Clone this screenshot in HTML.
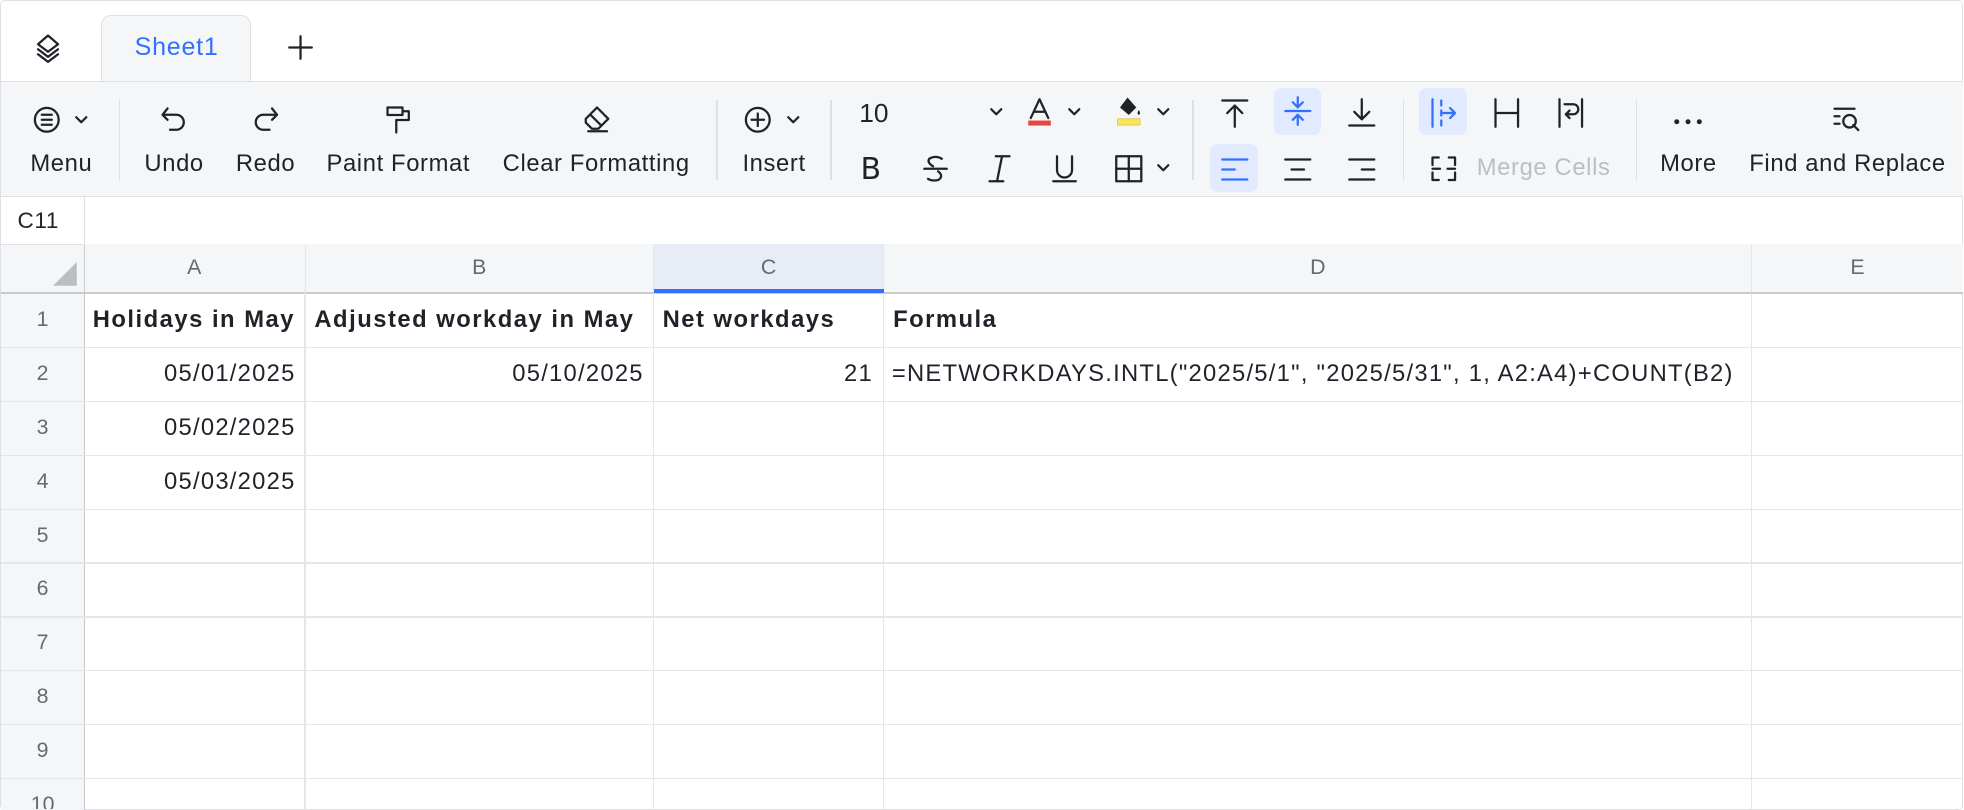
<!DOCTYPE html>
<html><head><meta charset="utf-8">
<style>
html,body{margin:0;padding:0;background:#fff;width:1964px;height:810px;overflow:hidden}
#w{zoom:1.25255;position:relative;width:1568px;height:647px;font-family:"Liberation Sans",sans-serif;color:#1f2329}
.a{position:absolute}
.lbl{position:absolute;font-size:19px;letter-spacing:0.5px;top:120px;transform:translateX(-50%);white-space:nowrap;color:#1f2329}
.sep{position:absolute;width:1px;background:#dee0e3;top:80px;height:64px}
svg{position:absolute;overflow:visible}
.ic{fill:none;stroke:#1f2329;stroke-width:1.8;stroke-linecap:round;stroke-linejoin:round}
.bl{stroke:#3370ff}
.hl{position:absolute;background:#e1eaff;border-radius:6px;width:38px;height:38px}
.col{position:absolute;top:195px;height:38px;line-height:38px;text-align:center;font-size:17px;color:#646a73;background:#f5f6f7;border-right:1px solid #e5e6e8;box-sizing:border-box}
.rh{position:absolute;left:1px;width:66px;text-align:center;font-size:17px;color:#646a73;background:#f5f6f7}
.hline{position:absolute;left:1px;width:1566px;height:1px;background:#e5e6e8}
.vline{position:absolute;top:234px;height:413px;width:1px;background:#e5e6e8}
.c{position:absolute;font-size:19px;letter-spacing:1px;height:43px;line-height:43px;white-space:nowrap}
.b{font-weight:bold;letter-spacing:1.2px}
.r{text-align:right}
.n{font-size:17px;letter-spacing:0;color:#646a73;left:1px;width:66px;text-align:center}
</style></head><body><div id="w">
<div class="a" style="left:0;top:0;width:1566px;height:645px;border:1px solid #dee0e3;border-radius:4px"></div>
<svg style="left:26px;top:26px" width="24" height="24" viewBox="0 0 24 24"><path class="ic" d="M12 2 L20 9 L12 15 L4 9 Z M4 13 L12 19 L20 13 M4 17 L12 23 L20 17"/></svg>
<div class="a" style="left:81px;top:12px;width:118px;height:54px;background:#f5f6f7;border:1px solid #dee0e3;border-bottom:none;border-radius:8px 8px 0 0"></div>
<div class="a" style="left:81px;top:26px;width:120px;text-align:center;font-size:20px;letter-spacing:0.6px;color:#3370ff">Sheet1</div>
<svg style="left:230px;top:28px" width="20" height="20"><path class="ic" d="M10 1V19M1 10H19" stroke-width="2.2"/></svg>
<div class="a" style="left:1px;top:65px;width:1566px;height:92px;background:#f5f6f7;border-top:1px solid #dee0e3;border-bottom:1px solid #dee0e3;box-sizing:border-box"></div>
<svg style="left:26px;top:85px" width="22" height="22"><circle class="ic" cx="11" cy="11" r="9.5"/><path class="ic" d="M7 7H15M7 11H15M7 15H15"/></svg>
<svg style="left:60px;top:93px" width="10" height="6"><path class="ic" d="M1 1L5 5L9 1" stroke-width="1.4"/></svg>
<div class="lbl" style="left:49px">Menu</div>
<div class="sep" style="left:95px"></div>
<svg style="left:128px;top:85px" width="22" height="22"><path class="ic" d="M6 2L2 7L6 11M2 7H13A6 6 0 0 1 13 19H8"/></svg>
<div class="lbl" style="left:139px">Undo</div>
<svg style="left:201px;top:85px" width="22" height="22"><path class="ic" d="M16 2L20 7L16 11M20 7H9A6 6 0 0 0 9 19H14"/></svg>
<div class="lbl" style="left:212px">Redo</div>
<svg style="left:307px;top:84px" width="22" height="24"><path class="ic" d="M2 2H14V8H2ZM14 5H19V12H9V22"/></svg>
<div class="lbl" style="left:318px">Paint Format</div>
<svg style="left:465px;top:84px" width="24" height="24"><path class="ic" d="M12 2L21 11L13 19H8L3 14V11ZM7 8L15 16M5 21H20"/></svg>
<div class="lbl" style="left:476px">Clear Formatting</div>
<div class="sep" style="left:572px"></div>
<svg style="left:594px;top:85px" width="22" height="22"><circle class="ic" cx="11" cy="11" r="9.5"/><path class="ic" d="M11 6V16M6 11H16"/></svg>
<svg style="left:628px;top:93px" width="10" height="6"><path class="ic" d="M1 1L5 5L9 1" stroke-width="1.4"/></svg>
<div class="lbl" style="left:618px">Insert</div>
<div class="sep" style="left:663px"></div>
<div class="a" style="left:686px;top:78px;font-size:21px">10</div>
<svg style="left:790px;top:86px" width="10" height="6"><path class="ic" d="M1 1L5 5L9 1" stroke-width="1.4"/></svg>
<svg style="left:820px;top:78px" width="20" height="24"><path class="ic" d="M3 16L10 1L17 16M5.5 11H14.5"/><rect x="1" y="18" width="18" height="4" fill="#e5483f"/></svg>
<svg style="left:853px;top:86px" width="10" height="6"><path class="ic" d="M1 1L5 5L9 1" stroke-width="1.4"/></svg>
<svg style="left:890px;top:76px" width="22" height="26"><path d="M10 2L17 10L11 16L4 10Z" fill="#1f2329"/><path d="M19 12Q21 15 19 16Q17 15 19 12Z" fill="#1f2329"/><rect x="2" y="19" width="18" height="5" fill="#fbe35b" stroke="#d9c243" stroke-width=".6"/></svg>
<svg style="left:924px;top:86px" width="10" height="6"><path class="ic" d="M1 1L5 5L9 1" stroke-width="1.4"/></svg>
<div class="a" style="left:687px;top:121px;font-size:24px;font-family:'DejaVu Sans',sans-serif">B</div>
<svg style="left:737px;top:124px" width="20" height="22"><path class="ic" d="M15 3Q10 0 5 3Q3 6 8 9M1 11H19M12 13Q17 17 12 20Q7 21 4 19"/></svg>
<svg style="left:788px;top:124px" width="20" height="22"><path class="ic" d="M7 1H18M2 21H13M12 1L8 21"/></svg>
<svg style="left:840px;top:124px" width="20" height="22"><path class="ic" d="M4 1V12A6 6 0 0 0 16 12V1M1 21H19"/></svg>
<svg style="left:890px;top:124px" width="22" height="22"><rect class="ic" x="1" y="1" width="20" height="20"/><path class="ic" d="M11 1V21M1 11H21"/></svg>
<svg style="left:924px;top:131px" width="10" height="6"><path class="ic" d="M1 1L5 5L9 1" stroke-width="1.4"/></svg>
<div class="sep" style="left:952px"></div>
<svg style="left:975px;top:78px" width="22" height="24"><path class="ic" d="M1 2H21M11 6V23M5 12L11 6L17 12"/></svg>
<div class="hl" style="left:1017px;top:70px"></div>
<svg style="left:1025px;top:77px" width="22" height="24"><path class="ic bl" d="M1 12H21M11 1V9M7 5L11 9L15 5M11 23V15M7 19L11 15L15 19"/></svg>
<svg style="left:1076px;top:78px" width="22" height="24"><path class="ic" d="M1 22H21M11 1V17M5 11L11 17L17 11"/></svg>
<div class="hl" style="left:966px;top:115px"></div>
<svg style="left:975px;top:125px" width="22" height="20"><path class="ic bl" d="M1 2H21M1 10H11M1 18H21" stroke-width="2"/></svg>
<svg style="left:1025px;top:125px" width="22" height="20"><path class="ic" d="M1 2H21M6 10H16M1 18H21" stroke-width="2"/></svg>
<svg style="left:1076px;top:125px" width="22" height="20"><path class="ic" d="M1 2H21M11 10H21M1 18H21" stroke-width="2"/></svg>
<div class="sep" style="left:1120px"></div>
<div class="hl" style="left:1133px;top:70px"></div>
<svg style="left:1142px;top:78px" width="22" height="24"><path class="ic bl" d="M2 1V23M9 2V6M9 10V14M9 18V22M9 12H20M16 8L20 12L16 16"/></svg>
<svg style="left:1192px;top:78px" width="22" height="24"><path class="ic" d="M2 1V23M20 1V23M2 12H19"/></svg>
<svg style="left:1243px;top:78px" width="22" height="24"><path class="ic" d="M2 1V23M20 1V23M6 5H13A3 3 0 0 1 13 13H7M10 10L7 13L10 16"/></svg>
<svg style="left:1142px;top:124px" width="22" height="22"><path class="ic" d="M7 2H2V8M15 2H20V8M7 20H2V14M15 20H20V14M2 11H8M20 11H14" stroke="#bbbfc4"/></svg>
<div class="a" style="left:1179px;top:123px;font-size:19px;letter-spacing:0.5px;color:#bbbfc4">Merge Cells</div>
<div class="sep" style="left:1306px"></div>
<svg style="left:1336px;top:94px" width="26" height="6"><circle cx="3" cy="3" r="2" fill="#1f2329"/><circle cx="12" cy="3" r="2" fill="#1f2329"/><circle cx="21" cy="3" r="2" fill="#1f2329"/></svg>
<div class="lbl" style="left:1348px">More</div>
<svg style="left:1463px;top:84px" width="24" height="24"><path class="ic" d="M2 3H18M2 9H6M2 15H6"/><circle class="ic" cx="14" cy="13" r="5"/><path class="ic" d="M17 16L21 20"/></svg>
<div class="lbl" style="left:1475px">Find and Replace</div>
<div class="a" style="left:14px;top:166px;font-size:18px;letter-spacing:0.5px">C11</div>
<div class="a" style="left:67px;top:157px;width:1px;height:38px;background:#dee0e3"></div>
<div class="a" style="left:1px;top:195px;width:1566px;height:1px;background:#dee0e3"></div>
<div class="a" style="left:1px;top:196px;width:66px;height:38px;background:#f5f6f7"></div>
<svg style="left:42px;top:209px" width="20" height="20"><path d="M19 0V19H0Z" fill="#bbbfc4"/></svg>
<div class="col" style="left:67px;width:177px">A</div>
<div class="col" style="left:244px;width:278px">B</div>
<div class="col" style="left:522px;width:184px;background:#e8ecf7">C</div>
<div class="col" style="left:706px;width:693px">D</div>
<div class="col" style="left:1399px;width:168px;border-right:none">E</div>
<div class="a" style="left:1px;top:233px;width:1566px;height:2px;background:#c8cacd"></div>
<div class="a" style="left:522px;top:231px;width:184px;height:3px;background:#3370ff"></div>
<div class="rh" style="top:235px;height:412px"></div>
<div class="a" style="left:67px;top:196px;width:1px;height:451px;background:#c8cacd"></div>
<div class="vline" style="left:243px"></div>
<div class="vline" style="left:521px"></div>
<div class="vline" style="left:705px"></div>
<div class="vline" style="left:1398px"></div>
<div class="hline" style="top:277px"></div><div class="hline" style="top:320px"></div><div class="hline" style="top:363px"></div><div class="hline" style="top:406px"></div><div class="hline" style="top:449px"></div><div class="hline" style="top:492px"></div><div class="hline" style="top:535px"></div><div class="hline" style="top:578px"></div><div class="hline" style="top:621px"></div>
<div class="c n" style="top:234px">1</div>
<div class="c n" style="top:277px">2</div>
<div class="c n" style="top:320px">3</div>
<div class="c n" style="top:363px">4</div>
<div class="c n" style="top:406px">5</div>
<div class="c n" style="top:449px">6</div>
<div class="c n" style="top:492px">7</div>
<div class="c n" style="top:535px">8</div>
<div class="c n" style="top:578px">9</div>
<div class="c n" style="top:623px;height:23px;overflow:hidden"><span style="position:relative;top:-2px">10</span></div>
<div class="c b" style="left:74px;top:234px">Holidays in May</div>
<div class="c b" style="left:251px;top:234px">Adjusted workday in May</div>
<div class="c b" style="left:529px;top:234px">Net workdays</div>
<div class="c b" style="left:713px;top:234px">Formula</div>
<div class="c r" style="left:68px;width:168px;top:277px">05/01/2025</div>
<div class="c r" style="left:244px;width:270px;top:277px">05/10/2025</div>
<div class="c r" style="left:522px;width:175px;top:277px">21</div>
<div class="c" style="left:712px;top:277px">=NETWORKDAYS.INTL("2025/5/1", "2025/5/31", 1, A2:A4)+COUNT(B2)</div>
<div class="c r" style="left:68px;width:168px;top:320px">05/02/2025</div>
<div class="c r" style="left:68px;width:168px;top:363px">05/03/2025</div>
</div></body></html>
